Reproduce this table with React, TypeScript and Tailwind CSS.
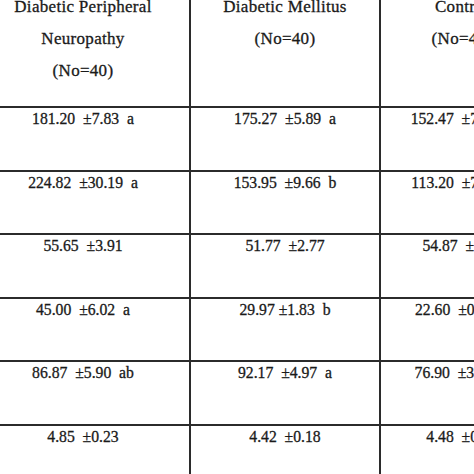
import React from "react";

const rows: [string, string, string][] = [
  ["181.20  ±7.83  a", "175.27  ±5.89  a", "152.47  ±7.21  b"],
  ["224.82  ±30.19  a", "153.95  ±9.66  b", "113.20  ±7.56  c"],
  ["55.65  ±3.91", "51.77  ±2.77", "54.87  ±2.46"],
  ["45.00  ±6.02  a", "29.97 ±1.83  b", "22.60  ±0.96  c"],
  ["86.87  ±5.90  ab", "92.17  ±4.97  a", "76.90  ±3.36  b"],
  ["4.85  ±0.23", "4.42  ±0.18", "4.48  ±0.19"],
];

export default function App() {
  return (
    <div
      className="w-[474px] h-[474px] overflow-hidden bg-white text-[#1a1a1a] [-webkit-text-stroke:0.3px_#1a1a1a]"
      style={{ fontFamily: '"Liberation Serif", "Times New Roman", serif' }}
    >
      <div className="w-[543px]">
        <div className="flex h-[108px] border-b-2 border-[#2b2b2b] text-[17px] leading-[32px] tracking-[0.3px]">
          <div className="w-[191px] shrink-0 border-r-2 border-[#2b2b2b] pr-[23px] text-center">
            <div className="-mt-[9px]">
              <div>Diabetic Peripheral</div>
              <div>Neuropathy</div>
              <div>(No=40)</div>
            </div>
          </div>
          <div className="w-[190px] shrink-0 border-r-2 border-[#2b2b2b] text-center">
            <div className="-mt-[9px]">
              <div>Diabetic Mellitus</div>
              <div>(No=40)</div>
            </div>
          </div>
          <div className="w-[162px] shrink-0 text-center">
            <div className="-mt-[9px]">
              <div>Control</div>
              <div>(No=40)</div>
            </div>
          </div>
        </div>
        {rows.map((r, i) => (
          <div
            key={i}
            className="flex h-[63.6px] border-b-2 border-[#2b2b2b] text-[15.7px] leading-[20px]"
          >
            <div className="w-[191px] shrink-0 border-r-2 border-[#2b2b2b] pr-[23px] pt-px text-center whitespace-pre">
              {r[0]}
            </div>
            <div className="w-[190px] shrink-0 border-r-2 border-[#2b2b2b] pt-px text-center whitespace-pre">
              {r[1]}
            </div>
            <div className="w-[162px] shrink-0 pt-px text-center whitespace-pre">
              {r[2]}
            </div>
          </div>
        ))}
      </div>
    </div>
  );
}
